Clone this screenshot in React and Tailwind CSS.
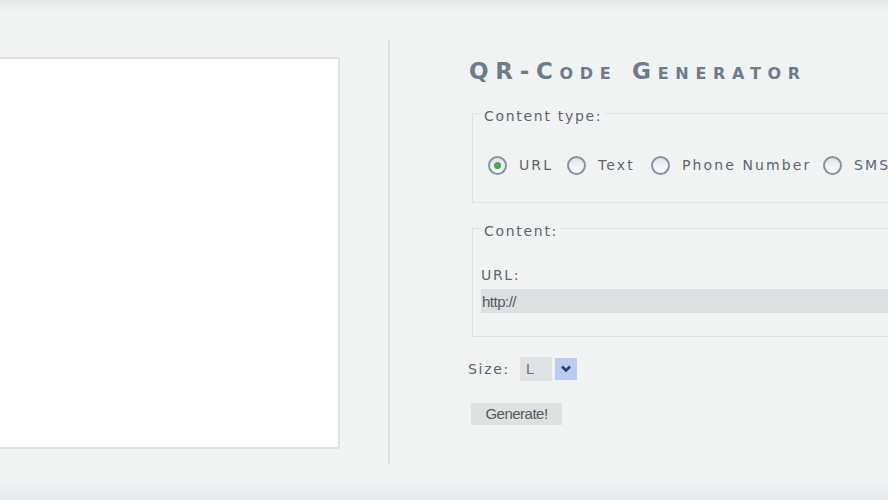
import React, { useState } from 'react';

const Radio = ({ checked, label, width, onClick }) => (
  <label onClick={onClick} className="flex shrink-0 items-center cursor-pointer">
    <span className="flex h-[19px] w-[19px] items-center justify-center rounded-full border-2 border-[#8593a2] bg-[linear-gradient(to_bottom,#dfe4e8,#ffffff)]">
      {checked && <span className="h-[7px] w-[7px] rounded-full bg-[#3cb043]" />}
    </span>
    <span className={`ml-[12px] whitespace-nowrap ${width}`}>{label}</span>
  </label>
);

const App = () => {
  const [type, setType] = useState('url');

  return (
    <div className="relative h-[500px] w-[888px] overflow-hidden bg-[linear-gradient(to_bottom,#e3e7e7,#f1f3f3_12px,#f1f3f3_478px,#e6e9e9)] font-['DejaVu_Sans',sans-serif] text-[14px] tracking-[1.7px] text-[#5c6570]">
      <div className="flex items-start">
        {/* QR preview */}
        <div className="mt-[57px] h-[392px] w-[340px] shrink-0 border-y-2 border-r-2 border-[#dde2e2] bg-white" />

        {/* Divider */}
        <div className="ml-[48px] mt-[40px] h-[424px] w-[2px] shrink-0 bg-[#dce1e1]" />

        {/* Form */}
        <div className="ml-[78px] shrink-0 pt-[57px]">
          <h1 className="h-[28px] pl-[1px] text-[23px] font-bold leading-[28px] tracking-[6.7px] text-[#6d7b8c] [font-variant:small-caps]">
            QR-Code Generator
          </h1>

          <fieldset className="mt-[20px] ml-[4px] w-[460px] border border-[#dde1e1]">
            <legend className="ml-[8px] px-[3px] leading-[16px]">
              <span className="relative top-[3px]">Content type:</span>
            </legend>
            <div className="flex h-[81px] items-center gap-[12px] pl-[15px] pt-[8px] tracking-[2.1px]">
              <Radio checked={type === 'url'} label="URL" width="w-[36px]" onClick={() => setType('url')} />
              <Radio checked={type === 'text'} label="Text" width="w-[41px]" onClick={() => setType('text')} />
              <Radio checked={type === 'phone'} label="Phone Number" width="w-[129px]" onClick={() => setType('phone')} />
              <Radio checked={type === 'sms'} label="SMS" width="w-[40px]" onClick={() => setType('sms')} />
            </div>
          </fieldset>

          <fieldset className="mt-[17px] ml-[4px] w-[460px] border border-[#dde1e1]">
            <legend className="ml-[8px] px-[3px] leading-[16px]">
              <span className="relative top-[3px]">Content:</span>
            </legend>
            <div className="h-[100px] pl-[8px] pt-[31px]">
              <div className="leading-[16px]">URL:</div>
              <input
                defaultValue="http://"
                className="mt-[6px] h-[24px] w-full bg-[#dde0e0] px-[1px] font-['Liberation_Sans',sans-serif] text-[15px] tracking-[-0.5px] text-[#555a60] outline-none"
              />
            </div>
          </fieldset>

          <div className="mt-[20px] flex items-center">
            <span className="w-[52px] leading-[16px]">Size:</span>
            <div className="flex h-[24px] w-[32px] items-center bg-[#dfe2e2] pl-[6px] font-['Liberation_Sans',sans-serif] text-[15px] text-[#6a7078]">L</div>
            <div className="ml-[3px] flex h-[22px] w-[22px] items-center justify-center bg-[#b9cdf2]">
              <svg width="12" height="8" viewBox="0 0 12 8">
                <path d="M2 1.5 L6 5.5 L10 1.5" fill="none" stroke="#2b3f6b" strokeWidth="2.6" />
              </svg>
            </div>
          </div>

          <button className="mt-[22px] ml-[3px] h-[22px] w-[91px] bg-[#dfe1e1] font-['Liberation_Sans',sans-serif] text-[15px] tracking-[-0.5px] text-[#555a60]">
            Generate!
          </button>
        </div>
      </div>
    </div>
  );
};

export default App;
